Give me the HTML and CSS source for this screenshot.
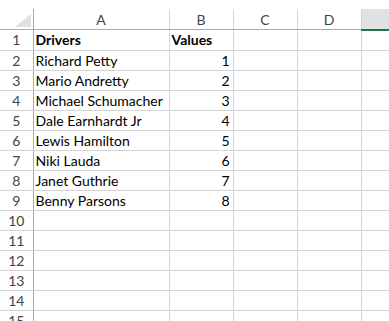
FILE: index.html
```html
<!DOCTYPE html>
<html lang="en">
<head>
<meta charset="UTF-8">
<title>Drivers</title>
<link rel="stylesheet" href="styles.css">
</head>
<body>
<table class="sheet">
  <colgroup>
    <col class="c-head">
    <col class="c-a">
    <col class="c-b">
    <col class="c-c">
    <col class="c-d">
    <col class="c-e">
  </colgroup>
  <tr class="col-heads">
    <th class="corner"><svg width="16" height="13" viewBox="0 0 16 13"><polygon points="16,0 16,13 0,13" fill="#dfdfdf"/></svg></th>
    <th>A</th>
    <th>B</th>
    <th>C</th>
    <th>D</th>
    <th class="active"></th>
  </tr>
  <tr><th>1</th><td class="bold">Drivers</td><td class="bold">Values</td><td></td><td></td><td></td></tr>
  <tr><th>2</th><td>Richard Petty</td><td class="num">1</td><td></td><td></td><td></td></tr>
  <tr><th>3</th><td>Mario Andretty</td><td class="num">2</td><td></td><td></td><td></td></tr>
  <tr><th>4</th><td>Michael Schumacher</td><td class="num">3</td><td></td><td></td><td></td></tr>
  <tr><th>5</th><td>Dale Earnhardt Jr</td><td class="num">4</td><td></td><td></td><td></td></tr>
  <tr><th>6</th><td>Lewis Hamilton</td><td class="num">5</td><td></td><td></td><td></td></tr>
  <tr><th>7</th><td>Niki Lauda</td><td class="num">6</td><td></td><td></td><td></td></tr>
  <tr><th>8</th><td>Janet Guthrie</td><td class="num">7</td><td></td><td></td><td></td></tr>
  <tr><th>9</th><td>Benny Parsons</td><td class="num">8</td><td></td><td></td><td></td></tr>
  <tr><th>10</th><td></td><td></td><td></td><td></td><td></td></tr>
  <tr><th>11</th><td></td><td></td><td></td><td></td><td></td></tr>
  <tr><th>12</th><td></td><td></td><td></td><td></td><td></td></tr>
  <tr><th>13</th><td></td><td></td><td></td><td></td><td></td></tr>
  <tr><th>14</th><td></td><td></td><td></td><td></td><td></td></tr>
  <tr><th>15</th><td></td><td></td><td></td><td></td><td></td></tr>
</table>
</body>
</html>
```

FILE: styles.css
```css
body { margin: 0; padding-top: 9px; background: #fff; overflow: hidden; font-family: Lato, "Noto Sans", sans-serif; font-size: 14px; color: #000; }
.sheet { border-collapse: collapse; table-layout: fixed; width: 420px; }
.c-head { width: 33px; }
.c-a { width: 136px; }
.c-b, .c-c, .c-d { width: 64px; }
.c-e { width: 59px; }
.sheet td, .sheet th { height: 18px; padding: 1px 3px 0 2px; border-right: 1px solid #d4d4d4; border-bottom: 1px solid #d4d4d4; white-space: nowrap; overflow: hidden; line-height: 18px; }
.sheet th { font-weight: normal; color: #444; text-align: center; padding: 1px 0 0; }
.sheet tr th:first-child { border-right-color: #ababab; }
.col-heads th { border-bottom-color: #ababab; border-right-color: #d4d4d4; vertical-align: bottom; }
.col-heads th.corner { text-align: right; vertical-align: bottom; padding: 0 2px 2px 0; line-height: 0; }
.col-heads th.active { background: #e1e1e1; border-bottom: 2px solid #217346; }
.bold { font-weight: bold; }
.num { text-align: right; }
```
